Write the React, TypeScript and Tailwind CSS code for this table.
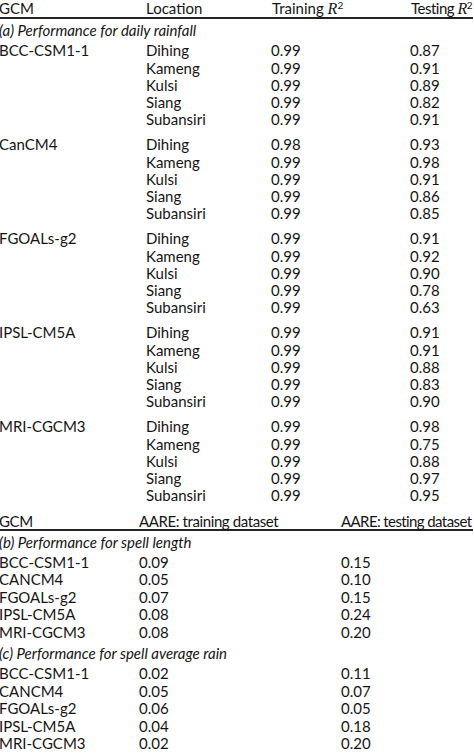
import React from 'react';

const groups = [
  { gcm: 'BCC-CSM1-1', train: ['0.99', '0.99', '0.99', '0.99', '0.99'], test: ['0.87', '0.91', '0.89', '0.82', '0.91'] },
  { gcm: 'CanCM4', train: ['0.98', '0.99', '0.99', '0.99', '0.99'], test: ['0.93', '0.98', '0.91', '0.86', '0.85'] },
  { gcm: 'FGOALs-g2', train: ['0.99', '0.99', '0.99', '0.99', '0.99'], test: ['0.91', '0.92', '0.90', '0.78', '0.63'] },
  { gcm: 'IPSL-CM5A', train: ['0.99', '0.99', '0.99', '0.99', '0.99'], test: ['0.91', '0.91', '0.88', '0.83', '0.90'] },
  { gcm: 'MRI-CGCM3', train: ['0.99', '0.99', '0.99', '0.99', '0.99'], test: ['0.98', '0.75', '0.88', '0.97', '0.95'] },
];

const locations = ['Dihing', 'Kameng', 'Kulsi', 'Siang', 'Subansiri'];

const spellLength = [
  ['BCC-CSM1-1', '0.09', '0.15'],
  ['CANCM4', '0.05', '0.10'],
  ['FGOALs-g2', '0.07', '0.15'],
  ['IPSL-CM5A', '0.08', '0.24'],
  ['MRI-CGCM3', '0.08', '0.20'],
];

const spellRain = [
  ['BCC-CSM1-1', '0.02', '0.11'],
  ['CANCM4', '0.05', '0.07'],
  ['FGOALs-g2', '0.06', '0.05'],
  ['IPSL-CM5A', '0.04', '0.18'],
  ['MRI-CGCM3', '0.02', '0.20'],
];

const R2 = () => (
  <span>
    <span className="italic font-['Liberation_Serif',serif] text-[16px]">R</span>
    <sup className="text-[10px]">2</sup>
  </span>
);

const SmallRows = ({ rows }: { rows: string[][] }) => (
  <div className="flex flex-col">
    {rows.map((r) => (
      <div key={r[0]} className="flex h-[17.5px] items-center whitespace-nowrap">
        <div className="w-[140px] shrink-0">{r[0]}</div>
        <div className="w-[202px] shrink-0">{r[1]}</div>
        <div className="shrink-0">{r[2]}</div>
      </div>
    ))}
  </div>
);

export default function App() {
  return (
    <div className="w-[474px] h-[754px] overflow-hidden bg-white text-[#141414] text-[15px] font-['Lato',sans-serif] -ml-[1px]">
      {/* table part (a) */}
      <div className="flex h-[19px] items-center border-b-2 border-[#222] whitespace-nowrap">
        <div className="w-[147px] shrink-0">GCM</div>
        <div className="w-[126px] shrink-0">Location</div>
        <div className="w-[139px] shrink-0">Training <R2 /></div>
        <div className="shrink-0 tracking-[-0.5px]">Testing <R2 /></div>
      </div>
      <div className="flex h-[23px] items-center italic">(a) Performance for daily rainfall</div>

      <div className="flex flex-col gap-[7.75px]">
        {groups.map((g) => (
          <div key={g.gcm} className="flex flex-col">
            {locations.map((loc, i) => (
              <div key={loc} className="flex h-[17.25px] items-center whitespace-nowrap">
                <div className="w-[147px] shrink-0">{i === 0 ? g.gcm : ''}</div>
                <div className="w-[125px] shrink-0">{loc}</div>
                <div className="w-[139px] shrink-0">{g.train[i]}</div>
                <div className="shrink-0">{g.test[i]}</div>
              </div>
            ))}
          </div>
        ))}
      </div>

      {/* table parts (b) and (c) */}
      <div className="mt-[8px] flex h-[19px] items-center border-b-2 border-[#222] whitespace-nowrap tracking-[-0.4px]">
        <div className="w-[140px] shrink-0">GCM</div>
        <div className="w-[202px] shrink-0">AARE: training dataset</div>
        <div className="shrink-0 tracking-[-0.6px]">AARE: testing dataset</div>
      </div>
      <div className="flex h-[22px] items-end italic">(b) Performance for spell length</div>
      <SmallRows rows={spellLength} />
      <div className="flex h-[24px] items-end italic">(c) Performance for spell average rain</div>
      <SmallRows rows={spellRain} />
    </div>
  );
}
